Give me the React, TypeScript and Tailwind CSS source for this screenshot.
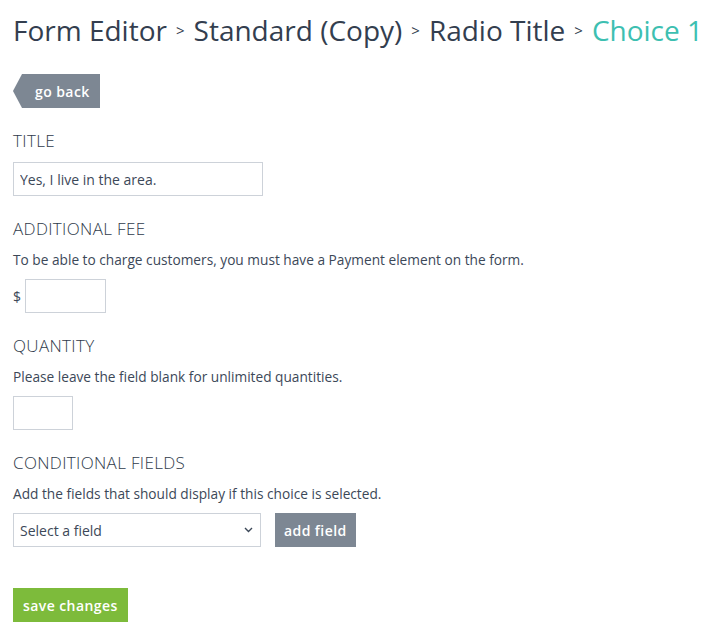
import React, { useState } from 'react';

const labelCls = 'text-[17px] font-light uppercase tracking-[0.02em] text-[#2f3b4b] leading-[20px]';
const helpCls = 'text-[13.7px] text-[#3c4858] leading-[18px]';
const inputCls = 'h-[34px] border border-[#cdd2d9] bg-white px-[6px] text-[14px] text-[#3c4858] outline-none';

const App: React.FC = () => {
    const [title, setTitle] = useState('Yes, I live in the area.');
    const [fee, setFee] = useState('');
    const [qty, setQty] = useState('');
    const [field, setField] = useState('');

    return (
        <div className="min-h-[634px] bg-white px-[13px] pt-[12px] font-['Open_Sans','Lato',sans-serif] text-[#3c4858]">
            {/* Breadcrumb */}
            <h1 className="flex items-center whitespace-nowrap text-[28px] leading-[36px] font-normal text-[#333e4f]">
                <span>Form Editor</span>
                <span className="mx-[9px] text-[15px]">&gt;</span>
                <span>Standard (Copy)</span>
                <span className="mx-[9px] text-[15px]">&gt;</span>
                <span>Radio Title</span>
                <span className="mx-[9px] text-[15px]">&gt;</span>
                <span className="text-[#3dbfb1]">Choice 1</span>
            </h1>

            <button className="relative mt-[26px] ml-[9px] flex h-[34px] items-center bg-[#7d8793] pl-[13px] pr-[10px] text-[14px] font-semibold tracking-[0.03em] text-white">
                <span className="absolute left-[-9px] top-0 h-0 w-0 border-y-[17px] border-r-[9px] border-y-transparent border-r-[#7d8793]" />
                go back
            </button>

            <section className="mt-[23px]">
                <div className={labelCls}>Title</div>
                <input
                    className={`${inputCls} mt-[11px] w-[250px]`}
                    value={title}
                    onChange={e => setTitle(e.target.value)}
                />
            </section>

            <section className="mt-[23px]">
                <div className={labelCls}>Additional Fee</div>
                <p className={`${helpCls} mt-[12px]`}>To be able to charge customers, you must have a Payment element on the form.</p>
                <div className="mt-[10px] flex items-center gap-[4px]">
                    <span className="text-[14px]">$</span>
                    <input className={`${inputCls} w-[81px]`} value={fee} onChange={e => setFee(e.target.value)} />
                </div>
            </section>

            <section className="mt-[23px]">
                <div className={labelCls}>Quantity</div>
                <p className={`${helpCls} mt-[12px]`}>Please leave the field blank for unlimited quantities.</p>
                <input className={`${inputCls} mt-[10px] w-[60px]`} value={qty} onChange={e => setQty(e.target.value)} />
            </section>

            <section className="mt-[23px]">
                <div className={labelCls}>Conditional Fields</div>
                <p className={`${helpCls} mt-[12px]`}>Add the fields that should display if this choice is selected.</p>
                <div className="mt-[10px] flex items-center gap-[14px]">
                    <div className="relative w-[248px]">
                        <select
                            className={`${inputCls} w-full appearance-none pr-[24px]`}
                            value={field}
                            onChange={e => setField(e.target.value)}
                        >
                            <option value="">Select a field</option>
                        </select>
                        <svg className="pointer-events-none absolute right-[8px] top-[14px]" width="9" height="6" viewBox="0 0 9 6">
                            <path d="M1 1l3.5 3.5L8 1" fill="none" stroke="#3c4858" strokeWidth="1.4" />
                        </svg>
                    </div>
                    <button className="h-[34px] bg-[#7d8793] px-[9px] text-[14px] font-semibold tracking-[0.03em] text-white">
                        add field
                    </button>
                </div>
            </section>

            <button className="mt-[41px] h-[34px] bg-[#7dbb3b] px-[10px] text-[14px] font-semibold tracking-[0.03em] text-white">
                save changes
            </button>
        </div>
    );
};

export default App;
